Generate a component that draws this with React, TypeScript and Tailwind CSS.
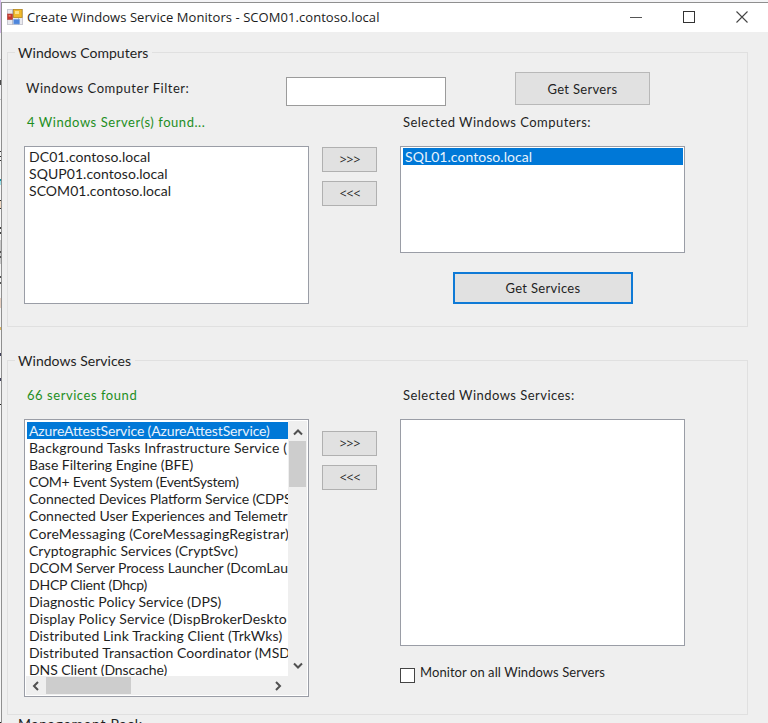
import type { ReactNode } from "react"

const servers = [
  { name: "DC01.contoso.local", tracking: "tracking-[0.07px]" },
  { name: "SQUP01.contoso.local", tracking: "tracking-[0.05px]" },
  { name: "SCOM01.contoso.local", tracking: "tracking-[0.05px]" },
]

const services = [
  { name: "AzureAttestService (AzureAttestService)", tracking: "tracking-[-0.13px]" },
  { name: "Background Tasks Infrastructure Service (", tracking: "tracking-[0.14px]" },
  { name: "Base Filtering Engine (BFE)", tracking: "tracking-[-0.02px]" },
  { name: "COM+ Event System (EventSystem)", tracking: "tracking-[-0.26px]" },
  { name: "Connected Devices Platform Service (CDPS", tracking: "tracking-[-0.1px]" },
  { name: "Connected User Experiences and Telemetr", tracking: "tracking-[-0.02px]" },
  { name: "CoreMessaging (CoreMessagingRegistrar)", tracking: "tracking-[0.18px]" },
  { name: "Cryptographic Services (CryptSvc)", tracking: "tracking-[0.05px]" },
  { name: "DCOM Server Process Launcher (DcomLau", tracking: "tracking-[-0.12px]" },
  { name: "DHCP Client (Dhcp)", tracking: "tracking-[-0.22px]" },
  { name: "Diagnostic Policy Service (DPS)", tracking: "tracking-[0.05px]" },
  { name: "Display Policy Service (DispBrokerDeskto", tracking: "tracking-[0.14px]" },
  { name: "Distributed Link Tracking Client (TrkWks)", tracking: "tracking-[0.1px]" },
  { name: "Distributed Transaction Coordinator (MSD", tracking: "tracking-[0.06px]" },
  { name: "DNS Client (Dnscache)", tracking: "tracking-[-0.05px]" },
]

// slivers of the window behind, visible along the left edge
const slivers = [
  "h-[33px] bg-[#d3b8e8]",
  "h-[26px] bg-[#f4f4f6]",
  "h-px bg-[#c4c4c4]",
  "h-[20px] bg-[#f4f4f6]",
  "h-[5px] bg-[#4a4a4a]",
  "h-[14px] bg-[#f4f4f6]",
  "h-px bg-[#c4c4c4]",
  "h-[51px] bg-[#f7f7f7]",
  "h-px bg-[#333]",
  "h-[4px] bg-[#f7f7f7]",
  "h-px bg-[#333]",
  "h-[3px] bg-[#f7f7f7]",
  "h-px bg-[#333]",
  "h-[18px] bg-[#f7f7f7]",
  "h-[2px] bg-[#1a8fa0]",
  "h-[4px] bg-[#9fe0e8]",
  "h-[15px] bg-[#f7f7f7]",
  "h-px bg-[#333]",
  "h-[7px] bg-[#f0d8c0]",
  "h-px bg-[#333]",
  "h-[18px] bg-[#f7f7f7]",
  "h-[2px] bg-[#444]",
  "h-[3px] bg-[#f7f7f7]",
  "h-[2px] bg-[#444]",
  "h-[6px] bg-[#f7f7f7]",
  "h-[11px] bg-[#c8c8c8]",
  "h-[2px] bg-[#555]",
  "h-[3px] bg-[#c8c8c8]",
  "h-[2px] bg-[#555]",
  "h-[6px] bg-[#c8c8c8]",
  "h-[12px] bg-[#f4f4f4]",
  "h-[2px] bg-[#555]",
  "h-[4px] bg-[#f4f4f4]",
  "h-[2px] bg-[#555]",
  "h-[14px] bg-[#f4f4f4]",
  "h-[10px] bg-[#e6cfc0]",
  "h-[19px] bg-[#f4f4f4]",
  "h-[3px] bg-[#e0b860]",
  "h-[23px] bg-[#f4f4f4]",
  "h-[3px] bg-[#40405a]",
  "h-[22px] bg-[#f4f4f4]",
  "h-[3px] bg-[#40405a]",
  "h-[23px] bg-[#f4f4f4]",
  "h-px bg-[#222]",
  "h-[317px] bg-[#f6f6f6]",
  "h-[2px] bg-[#222]",
]

function AppIcon() {
  return (
    <svg width="16" height="16" viewBox="0 0 16 16">
      <rect x="0.5" y="0.5" width="15" height="15" fill="#e9e9ee" stroke="#c9c9d2" />
      <path d="M0 8h16M5.5 0v16M11.5 9v7" stroke="#b9bcc9" strokeWidth="1" />
      <rect x="0.5" y="5" width="5" height="5.5" fill="#c8372d" stroke="#b0403a" strokeWidth="0.6" />
      <rect x="1.6" y="6" width="2" height="1.6" fill="#e98478" />
      <rect x="6.5" y="0.5" width="8.6" height="8" fill="#f0b92c" stroke="#b88a1c" strokeWidth="0.8" />
      <rect x="8" y="2" width="4" height="3" fill="#fbe28a" />
      <rect x="6.8" y="10.5" width="5.6" height="4.5" fill="#4d86dc" stroke="#6f9de0" strokeWidth="0.6" />
    </svg>
  )
}

function TitleBar() {
  return (
    <div className="flex h-[29px] items-center bg-white pl-[5px]">
      <div className="-mt-px">
        <AppIcon />
      </div>
      <span className="ml-[4px] font-['Open_Sans',sans-serif] text-[13px] leading-[29px] tracking-[0.06px] text-[#1c1c1c]">
        Create Windows Service Monitors - SCOM01.contoso.local
      </span>
      <div className="-mt-px ml-auto mr-[20px] flex items-center gap-[41px]">
        <svg width="12" height="12" viewBox="0 0 12 12" stroke="#555" fill="none">
          <path d="M0 6.5h12" />
        </svg>
        <svg width="12" height="12" viewBox="0 0 12 12" stroke="#333" fill="none">
          <rect x="0.5" y="0.5" width="11" height="11" />
        </svg>
        <svg width="12" height="12" viewBox="0 0 12 12" stroke="#444" fill="none" strokeWidth="1.1">
          <path d="M0.5 0.5l11 11M11.5 0.5l-11 11" />
        </svg>
      </div>
    </div>
  )
}

function Legend({ children, tracking = "tracking-[0.04px]" }: { children: ReactNode; tracking?: string }) {
  return (
    <span className={`absolute -top-[9px] left-[7px] bg-[#efefef] pl-[3px] pr-[4px] text-[14px] leading-[18px] ${tracking}`}>
      {children}
    </span>
  )
}

function ArrowButton({ children }: { children: ReactNode }) {
  return (
    <button className="h-[25px] w-[55px] border border-[#b0b0b0] bg-[#e1e1e1] pl-px text-center font-['Open_Sans',sans-serif] text-[12px] leading-[22px]">
      {children}
    </button>
  )
}

function Arrows({ className }: { className: string }) {
  return (
    <div className={`flex flex-col gap-[9px] ${className}`}>
      <ArrowButton>&gt;&gt;&gt;</ArrowButton>
      <ArrowButton>&lt;&lt;&lt;</ArrowButton>
    </div>
  )
}

function Item({ name, tracking, selected }: { name: string; tracking: string; selected?: boolean }) {
  return (
    <div
      className={`h-[17.1px] shrink-0 pl-[2px] text-[14px] leading-[17px] [font-feature-settings:'liga'_1] ${tracking} ${
        selected ? "bg-[#0078d7] text-[#e8f2fc]" : ""
      }`}
    >
      {name}
    </div>
  )
}

function Chevron({ d }: { d: string }) {
  return (
    <svg width="10" height="10" viewBox="0 0 10 10" fill="none" stroke="#505050" strokeWidth="2">
      <path d={d} />
    </svg>
  )
}

function ServiceList() {
  return (
    <div className="flex h-[278px] w-[285px] flex-col border border-[#9a9da6] bg-white p-px">
      <div className="flex h-[255px]">
        <div className="w-[262px] overflow-hidden pl-px pt-px">
          {services.map((s, i) => (
            <Item key={s.name} {...s} selected={i === 0} />
          ))}
        </div>
        <div className="flex w-[19px] flex-col items-center bg-[#efefef]">
          <div className="flex h-[20px] items-center pt-[2px]">
            <Chevron d="M1 7.5L5 3.5L9 7.5" />
          </div>
          <div className="h-[46px] w-[17px] bg-[#cdcdcd]" />
          <div className="mt-auto flex h-[20px] items-center">
            <Chevron d="M1 2.5L5 6.5L9 2.5" />
          </div>
        </div>
      </div>
      <div className="flex flex-1 items-center bg-[#efefef]">
        <div className="flex w-[20px] justify-center">
          <Chevron d="M7 1L3 5L7 9" />
        </div>
        <div className="h-[17px] w-[85px] bg-[#cdcdcd]" />
        <div className="ml-auto mr-[24px] flex">
          <Chevron d="M3 1L7 5L3 9" />
        </div>
      </div>
    </div>
  )
}

function ComputersGroup() {
  return (
    <section className="relative mt-[20px] h-[275px] w-[741px] border border-[#e0e0e0] pl-[16px] pt-[19px]">
      <Legend>Windows Computers</Legend>
      <div className="flex h-[41px] items-start text-[13px]">
        <span className="w-[262px] pl-[2px] pt-[7px] leading-[18px] tracking-[0.52px]">Windows Computer Filter:</span>
        <div className="mt-[5px] h-[29px] w-[160px] border border-[#9b9b9b] bg-white" />
        <button className="ml-[69px] h-[33px] w-[135px] border border-[#b8b8b8] bg-[#e1e1e1] pt-px leading-[31px] tracking-[0.31px]">
          Get Servers
        </button>
      </div>
      <div className="flex h-[33px] text-[13px] leading-[18px]">
        <span className="w-[379px] pl-[3px] tracking-[0.55px] text-[#1e8e1e]">4 Windows Server(s) found...</span>
        <span className="tracking-[0.46px]">Selected Windows Computers:</span>
      </div>
      <div className="flex items-start">
        <div className="h-[158px] w-[285px] border border-[#9a9da6] bg-white px-[2px] pt-px">
          {servers.map((s) => (
            <Item key={s.name} {...s} />
          ))}
        </div>
        <Arrows className="ml-[13px] mt-px" />
        <div className="ml-[23px] flex w-[285px] flex-col items-start">
          <div className="h-[107px] w-full border border-[#9a9da6] bg-white pl-[2px] pr-px pt-px">
            <Item name="SQL01.contoso.local" tracking="tracking-[0.05px]" selected />
          </div>
          <button className="ml-[53px] mt-[19px] h-[32px] w-[180px] border-2 border-[#0f7ad6] bg-[#e1e1e1] text-[13px] leading-[28px] tracking-[0.31px]">
            Get Services
          </button>
        </div>
      </div>
    </section>
  )
}

function ServicesGroup() {
  return (
    <section className="relative mt-[33px] h-[355px] w-[741px] border border-[#e0e0e0] pl-[16px] pt-[25px]">
      <Legend>Windows Services</Legend>
      <div className="flex h-[33px] text-[13px] leading-[18px]">
        <span className="w-[379px] pl-[3px] tracking-[0.55px] text-[#1e8e1e]">66 services found</span>
        <span className="tracking-[0.46px]">Selected Windows Services:</span>
      </div>
      <div className="flex items-start">
        <ServiceList />
        <Arrows className="ml-[13px] mt-[12px]" />
        <div className="ml-[23px]">
          <div className="h-[227px] w-[285px] border border-[#9a9da6] bg-white" />
          <label className="mt-[17px] flex items-start text-[13px] leading-[18px] tracking-[0.07px]">
            <span className="mt-[5px] h-[15px] w-[15px] border border-[#444] bg-white" />
            <span className="ml-[5px]">Monitor on all Windows Servers</span>
          </label>
        </div>
      </div>
    </section>
  )
}

export default function App() {
  return (
    <div className="flex h-[723px] w-[768px] overflow-hidden bg-[#f4f4f6] font-['Lato',sans-serif] text-[#1f1f1f] whitespace-nowrap">
      <div className="flex w-px flex-col">
        {slivers.map((s, i) => (
          <div key={i} className={`shrink-0 ${s}`} />
        ))}
      </div>
      <div className="mt-[2px] flex-1 border-l border-t border-[#8f8f8f] bg-[#efefef]">
        <TitleBar />
        <main className="pl-[5px]">
          <ComputersGroup />
          <ServicesGroup />
          <div className="relative ml-px mt-[9px] h-px">
            <Legend tracking="tracking-[0.75px]">Management Pack</Legend>
          </div>
        </main>
      </div>
    </div>
  )
}
